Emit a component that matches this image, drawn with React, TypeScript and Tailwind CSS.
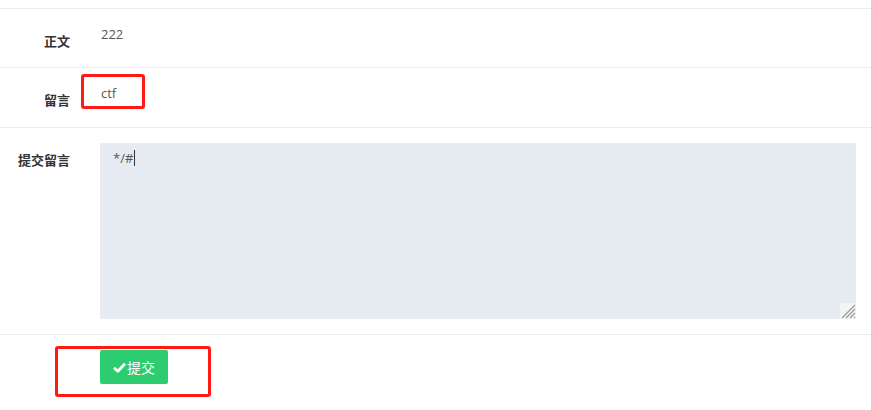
import React from "react";

const font = { fontFamily: '"Open Sans","Noto Sans CJK SC",sans-serif' };

export default function App() {
  return (
    <div className="relative w-[871px] h-[410px] bg-white overflow-hidden" style={font}>
      <div className="h-[8px]" />
      {/* Row 1 */}
      <div className="flex border-t border-[#e8ebf0] h-[59px]">
        <div className="w-[70px] text-right text-[13px] leading-[20px] font-bold text-[#333] pt-[22px]">正文</div>
        <div className="ml-[31px] text-[13px] leading-[20px] text-[#555] pt-[15px]">222</div>
      </div>
      {/* Row 2 */}
      <div className="flex border-t border-[#e8ebf0] h-[60px]">
        <div className="w-[70px] text-right text-[13px] leading-[20px] font-bold text-[#333] pt-[22px]">留言</div>
        <div className="ml-[31px] text-[13px] leading-[20px] text-[#555] pt-[15px]">ctf</div>
      </div>
      {/* Row 3 */}
      <div className="flex border-t border-[#e8ebf0] h-[207px]">
        <div className="w-[70px] text-right text-[13px] leading-[20px] font-bold text-[#333] pt-[22px] whitespace-nowrap">提交留言</div>
        <div className="ml-[30px] mt-[15px] w-[756px] h-[176px] bg-[#e6eaf1] rounded-[2px] relative">
          <div className="pl-[13px] pt-[5px] text-[13px] leading-[20px] text-[#555] flex items-center">
            <span>*/#</span>
            <span className="inline-block w-[1px] h-[16px] bg-[#333] ml-[1px]" />
          </div>
          <svg className="absolute right-0 bottom-0" width="16" height="16" viewBox="0 0 16 16">
            <rect x="0" y="0" width="16" height="16" fill="#f3f4f6" />
            <path d="M15 2 L2 15 M15 6 L6 15 M15 10 L10 15 M15 14 L14 15" stroke="#9a9a9a" strokeWidth="1.3" />
          </svg>
        </div>
      </div>
      {/* Button row */}
      <div className="flex border-t border-[#e8ebf0] pt-[15px]">
        <div className="ml-[100px] w-[68px] h-[34px] bg-[#2ecc71] rounded-[2px] flex items-center justify-center text-white text-[14px]">
          <svg width="13" height="11" viewBox="0 0 13 11" className="mr-[1px]">
            <path d="M1 5.8 L4.8 9.3 L12 1.8" stroke="#fff" strokeWidth="2.8" fill="none" strokeLinejoin="round" />
          </svg>
          <span>提交</span>
        </div>
      </div>
      {/* Red annotation boxes */}
      <div className="absolute left-[81px] top-[74px] w-[64px] h-[35px] border-[3px] border-[#ff1a14] rounded-[3px]" />
      <div className="absolute left-[55px] top-[346px] w-[156px] h-[51px] border-[3px] border-[#ff1a14] rounded-[3px]" />
    </div>
  );
}
